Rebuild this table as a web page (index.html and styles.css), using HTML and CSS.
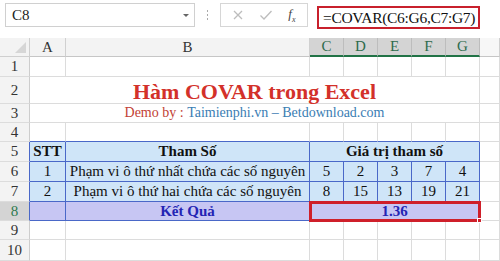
FILE: index.html
```html
<!DOCTYPE html>
<html>
<head>
<meta charset="utf-8">
<link rel="stylesheet" href="styles.css">
</head>
<body>
<div class="fbar">
  <div class="namebox"><span class="ref">C8</span><span class="caret"></span></div>
  <div class="dots"><i></i><i></i><i></i></div>
  <div class="btns">
    <svg class="ic" width="12" height="12" viewBox="0 0 12 12"><path d="M2 2 L10 10 M10 2 L2 10" stroke="#bdbdbd" stroke-width="1.3" fill="none"/></svg>
    <svg class="ic" width="14" height="12" viewBox="0 0 14 12"><path d="M1.5 6.5 L5 10 L12.5 2" stroke="#bdbdbd" stroke-width="1.3" fill="none"/></svg>
    <span class="fx">f<sub>x</sub></span>
  </div>
  <div class="formula">=COVAR(C6:G6,C7:G7)</div>
</div>
<div class="sheet">
  <div class="c corner"><span class="tri"></span></div>
  <div class="c ch">A</div>
  <div class="c ch">B</div>
  <div class="c ch sel">C</div>
  <div class="c ch sel">D</div>
  <div class="c ch sel">E</div>
  <div class="c ch sel">F</div>
  <div class="c ch sel">G</div>
  <div class="c ch last"></div>

  <div class="c rh">1</div>
  <div class="c"></div><div class="c"></div><div class="c"></div><div class="c"></div><div class="c"></div><div class="c"></div><div class="c"></div><div class="c"></div>

  <div class="c rh">2</div>
  <div class="c span7 title">Hàm COVAR trong Excel</div>
  <div class="c"></div>

  <div class="c rh">3</div>
  <div class="c span7 demo"><span class="red">Demo by : </span><span class="blue">Taimienphi.vn – Betdownload.com</span></div>
  <div class="c"></div>

  <div class="c rh">4</div>
  <div class="c bt"></div><div class="c bt"></div><div class="c bt"></div><div class="c bt"></div><div class="c bt"></div><div class="c bt"></div><div class="c bt"></div><div class="c"></div>

  <div class="c rh tb">5</div>
  <div class="c t b">STT</div>
  <div class="c t b">Tham Số</div>
  <div class="c t b span5">Giá trị tham số</div>
  <div class="c"></div>

  <div class="c rh tb">6</div>
  <div class="c t">1</div>
  <div class="c t">Phạm vi ô thứ nhất chứa các số nguyên</div>
  <div class="c t">5</div><div class="c t">2</div><div class="c t">3</div><div class="c t">7</div><div class="c t">4</div>
  <div class="c"></div>

  <div class="c rh tb">7</div>
  <div class="c t">2</div>
  <div class="c t">Phạm vi ô thứ hai chứa các số nguyên</div>
  <div class="c t">8</div><div class="c t">15</div><div class="c t">13</div><div class="c t">19</div><div class="c t">21</div>
  <div class="c"></div>

  <div class="c rh tb rsel">8</div>
  <div class="c t p"></div>
  <div class="c t p b res">Kết Quả</div>
  <div class="c t p b res span5 active">1.36<span class="handle"></span></div>
  <div class="c"></div>

  <div class="c rh">9</div>
  <div class="c"></div><div class="c"></div><div class="c"></div><div class="c"></div><div class="c"></div><div class="c"></div><div class="c"></div><div class="c"></div>

  <div class="c rh">10</div>
  <div class="c"></div><div class="c"></div><div class="c"></div><div class="c"></div><div class="c"></div><div class="c"></div><div class="c"></div><div class="c"></div>
</div>
</body>
</html>
```
FILE: styles.css
```css
* { box-sizing: border-box; }
html, body { margin: 0; padding: 0; background: #fff; }
body {
  width: 500px;
  height: 261px;
  overflow: hidden;
  font-family: "Liberation Serif", "Times New Roman", serif;
  color: #111;
}
.fbar {
  height: 38px;
  display: flex;
  align-items: flex-start;
  padding: 3px 0 0 5px;
  background: #fff;
}
.namebox {
  width: 190px;
  height: 24px;
  border: 1px solid #d0d0d0;
  display: flex;
  align-items: center;
  justify-content: space-between;
  padding: 0 5px 0 6px;
  font-size: 15px;
  color: #222;
}
.caret {
  width: 0; height: 0;
  border-left: 3px solid transparent;
  border-right: 3px solid transparent;
  border-top: 3px solid #666;
}
.dots {
  width: 25px;
  height: 24px;
  display: flex;
  flex-direction: column;
  align-items: center;
  justify-content: center;
  gap: 2px;
}
.dots i { display: block; width: 1px; height: 2px; background: #aaa; }
.btns {
  width: 88px;
  height: 24px;
  border: 1px solid #d6d6d6;
  display: flex;
  align-items: center;
  justify-content: space-around;
  padding: 0 4px;
}
.fx { font-style: italic; font-size: 13px; color: #444; }
.fx sub { font-size: 8px; }
.formula {
  margin-left: 9px;
  margin-top: 3px;
  width: 163px;
  height: 23px;
  border: 2px solid #c8202c;
  font-size: 15.5px;
  line-height: 19px;
  padding-left: 4px;
  letter-spacing: -0.3px;
  white-space: nowrap;
  color: #111;
}
.sheet {
  display: grid;
  grid-template-columns: 30px 36px 244px 34px 34px 34px 34px 34px 20px;
  grid-template-rows: 19px 20px 27px 19px 19px 20px 20px 20px 19px 19px 21px;
}
.c {
  border-right: 1px solid #dcdcdc;
  border-bottom: 1px solid #dcdcdc;
  display: flex;
  align-items: center;
  justify-content: center;
  font-size: 15px;
  white-space: nowrap;
  position: relative;
}
.corner { background: #f3f3f3; border-color: #cfcfcf; }
.tri {
  position: absolute;
  right: 3px; bottom: 3px;
  width: 0; height: 0;
  border-left: 11px solid transparent;
  border-bottom: 11px solid #d6d6d6;
}
.ch { background: #f3f3f3; border-color: #d0d0d0; border-bottom: 1px solid #c6c6c6; font-size: 15px; color: #333; }
.ch.sel { background: #d4d4d4; color: #2e6b4c; border-right-color: #bdbdbd; border-bottom: 2px solid #217346; }
.ch.last { background: #f7f7f7; }
.rh { background: #f3f3f3; border-right-color: #cdcdcd; font-size: 15px; color: #333; }
.rh.tb { border-right-color: #4a68c8; }
.rh.rsel { background: #d4d4d4; color: #2e7a4f; }
.span7 { grid-column: span 7; }
.span5 { grid-column: span 5; }
.title { font-weight: bold; font-size: 22px; color: #d3312a; border-right-color: #dcdcdc; padding-top: 3px; }
.demo { font-size: 14px; }
.red { color: #c23f35; white-space: pre; }
.blue { color: #3a7db3; }
.bt { border-bottom-color: #4a68c8; }
.t { background: #cfe5f8; border-right-color: #4a68c8; border-bottom-color: #4a68c8; }
.b { font-weight: bold; }
.p { background: #c7c6f3; }
.res { color: #2424b4; }
.active {
  outline: 3px solid #cf1f2a;
  outline-offset: -2px;
  z-index: 2;
}
.handle {
  position: absolute;
  right: -3px; bottom: -3px;
  width: 5px; height: 5px;
  background: #cf1f2a;
  border: 1px solid #fff;
}
```
